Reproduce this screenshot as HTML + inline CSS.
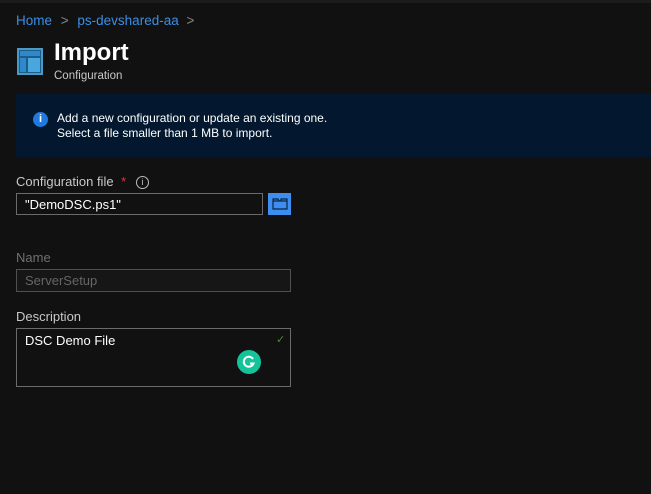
<!DOCTYPE html>
<html><head><style>
body{margin:0;width:651px;height:494px;background:#111111;font-family:"Liberation Sans",sans-serif;position:relative;overflow:hidden;color:#fff}
.a{position:absolute}
.lbl{font-size:13px;color:#c8c8c8}
.box{position:absolute;border:1px solid #6b6b6b;box-sizing:border-box}
</style></head><body>
<div class="a" style="left:0;top:0;width:651px;height:3px;background:#1c1c1c"></div>
<div class="a" style="left:16px;top:13px;font-size:13.5px;color:#3a8ee6">Home <span style="color:#888;margin:0 5px">&gt;</span> ps-devshared-aa <span style="color:#888;margin-left:4px">&gt;</span></div>
<svg class="a" style="left:17px;top:48px" width="26" height="27"><rect x="1" y="1" width="24" height="25" fill="#1c5c86" stroke="#4a9ac8" stroke-width="2"/><rect x="3" y="3" width="20" height="5" fill="#2d88cc"/><rect x="3" y="10" width="6" height="14" fill="#2d88cc"/><rect x="11" y="10" width="12" height="14" fill="#4aa7dd"/></svg>
<div class="a" style="left:54px;top:39px;font-size:24px;font-weight:bold">Import</div>
<div class="a" style="left:54px;top:70px;font-size:11.5px;color:#c8c8c8">Configuration</div>
<div class="a" style="left:16px;top:94px;width:635px;height:63px;background:#03182f"></div>
<div class="a" style="left:33px;top:112px;width:15px;height:15px;border-radius:50%;background:#1f7ae0;color:#fff;font-size:11px;font-weight:bold;text-align:center;line-height:15px">i</div>
<div class="a" style="left:57px;top:111px;font-size:12px;line-height:15px">Add a new configuration or update an existing one.<br>Select a file smaller than 1 MB to import.</div>
<div class="a lbl" style="left:16px;top:174px">Configuration file <span style="color:#e0393e;margin-left:4px">*</span> <span style="display:inline-block;width:11px;height:11px;border:1px solid #bbb;border-radius:50%;font-size:9px;text-align:center;line-height:11px;margin-left:6px;vertical-align:1px">i</span></div>
<div class="box" style="left:16px;top:193px;width:247px;height:22px"></div>
<div class="a" style="left:25px;top:197px;font-size:13px">"DemoDSC.ps1"</div>
<div class="a" style="left:268px;top:193px;width:23px;height:22px;background:#3d8ef0"></div>
<svg class="a" style="left:272px;top:197px" width="16" height="14"><path d="M1 4H15V12H1Z M1 4V2H6L7 4 M9 4V2H15V4" fill="none" stroke="#0b2545" stroke-width="1.2"/></svg>
<div class="a lbl" style="left:16px;top:250px;color:#707070">Name</div>
<div class="box" style="left:16px;top:269px;width:275px;height:23px;border-color:#505050;background:#161616"></div>
<div class="a" style="left:25px;top:273px;font-size:13px;color:#666">ServerSetup</div>
<div class="a lbl" style="left:16px;top:309px">Description</div>
<div class="box" style="left:16px;top:328px;width:275px;height:59px"></div>
<div class="a" style="left:25px;top:333px;font-size:13px">DSC Demo File</div>
<div class="a" style="left:276px;top:333px;font-size:11px;color:#4e8a2c">✓</div>
<div class="a" style="left:237px;top:350px;width:24px;height:24px;border-radius:50%;background:#15c39a"></div>
<svg class="a" style="left:241px;top:354px" width="16" height="16"><path d="M12 5A5 5 0 1 0 12.5 9.5H9" fill="none" stroke="#fff" stroke-width="2"/></svg>
</body></html>
